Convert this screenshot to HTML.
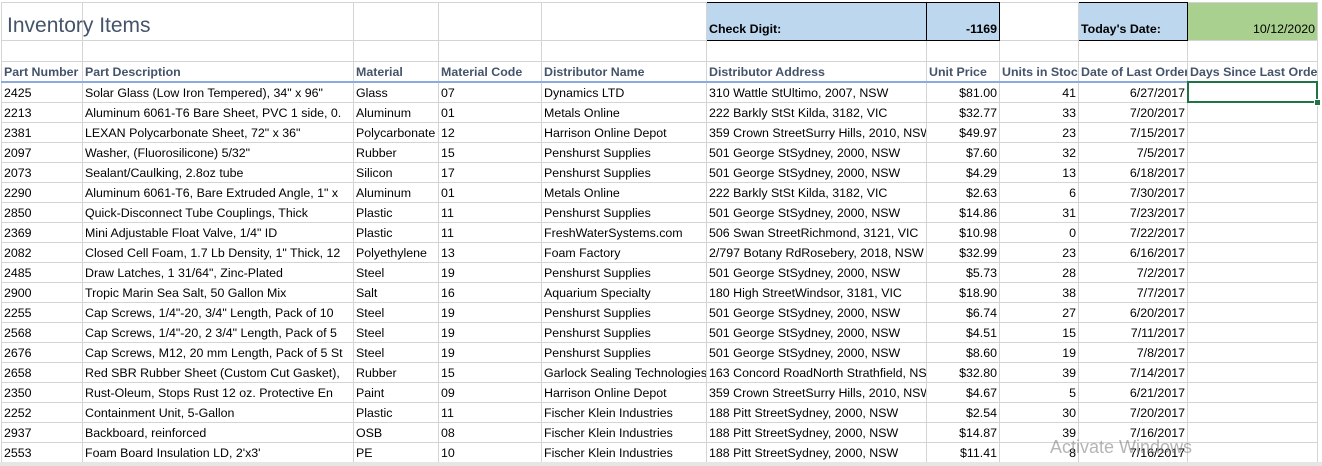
<!DOCTYPE html>
<html><head><meta charset="utf-8"><style>
html,body{margin:0;padding:0;background:#fff;width:1322px;height:466px;overflow:hidden;font-family:"Liberation Sans",sans-serif;}
table{position:absolute;left:1px;top:2px;width:1316px;border-collapse:collapse;table-layout:fixed;font-size:12.4px;color:#000;}
td{border:1px solid #d4d4d4;padding:0 2px;height:19px;white-space:nowrap;overflow:hidden;line-height:18px;vertical-align:bottom;}
td.r{text-align:right;}
tr.h td{color:#44546a;font-weight:bold;font-size:12.4px;}
tr.h{border-bottom:2px solid #8ea9db;}
.title{position:absolute;left:7px;top:14px;font-size:21px;color:#44546a;}
.blue{background:#bdd7ee;font-weight:bold;border:1px solid #000 !important;}
.green{background:#a9d08e;}
tr.t td{padding-bottom:2px;}
.sel{position:absolute;left:1187px;top:81px;width:127px;height:18px;border:2px solid #217346;}
.sel:after{content:"";position:absolute;right:-5px;bottom:-5px;width:5px;height:5px;background:#217346;border:1px solid #fff;}
.wm{position:absolute;left:1050px;top:437px;font-size:18px;color:rgba(120,120,120,.55);}
.bot{position:absolute;left:0;top:462px;width:1322px;height:4px;background:#e6e6e6;}
</style></head><body>
<table>
<colgroup><col style="width:81px"><col style="width:271px"><col style="width:85px"><col style="width:103px"><col style="width:165px"><col style="width:220px"><col style="width:73px"><col style="width:79px"><col style="width:109px"><col style="width:130px"></colgroup>
<tr class="t" style="height:38px"><td style="height:35px"></td><td></td><td></td><td></td><td></td><td class="blue">Check Digit:</td><td class="blue r">-1169</td><td></td><td class="blue">Today's Date:</td><td class="green r">10/12/2020</td></tr>
<tr style="height:21px"><td style="height:20px"></td><td></td><td></td><td></td><td></td><td></td><td></td><td></td><td></td><td></td></tr>
<tr class="h"><td>Part Number</td><td>Part Description</td><td>Material</td><td>Material Code</td><td>Distributor Name</td><td>Distributor Address</td><td>Unit Price</td><td>Units in Stock</td><td>Date of Last Order</td><td>Days Since Last Order</td></tr>
<tr><td>2425</td><td>Solar Glass (Low Iron Tempered), 34" x 96"</td><td>Glass</td><td>07</td><td>Dynamics LTD</td><td>310 Wattle StUltimo, 2007, NSW</td><td class="r">$81.00</td><td class="r">41</td><td class="r">6/27/2017</td><td></td></tr>
<tr><td>2213</td><td>Aluminum 6061-T6 Bare Sheet, PVC 1 side, 0.</td><td>Aluminum</td><td>01</td><td>Metals Online</td><td>222 Barkly StSt Kilda, 3182, VIC</td><td class="r">$32.77</td><td class="r">33</td><td class="r">7/20/2017</td><td></td></tr>
<tr><td>2381</td><td>LEXAN Polycarbonate Sheet, 72" x 36"</td><td>Polycarbonate</td><td>12</td><td>Harrison Online Depot</td><td>359 Crown StreetSurry Hills, 2010, NSW</td><td class="r">$49.97</td><td class="r">23</td><td class="r">7/15/2017</td><td></td></tr>
<tr><td>2097</td><td>Washer, (Fluorosilicone) 5/32"</td><td>Rubber</td><td>15</td><td>Penshurst Supplies</td><td>501 George StSydney, 2000, NSW</td><td class="r">$7.60</td><td class="r">32</td><td class="r">7/5/2017</td><td></td></tr>
<tr><td>2073</td><td>Sealant/Caulking, 2.8oz tube</td><td>Silicon</td><td>17</td><td>Penshurst Supplies</td><td>501 George StSydney, 2000, NSW</td><td class="r">$4.29</td><td class="r">13</td><td class="r">6/18/2017</td><td></td></tr>
<tr><td>2290</td><td>Aluminum 6061-T6, Bare Extruded Angle, 1" x</td><td>Aluminum</td><td>01</td><td>Metals Online</td><td>222 Barkly StSt Kilda, 3182, VIC</td><td class="r">$2.63</td><td class="r">6</td><td class="r">7/30/2017</td><td></td></tr>
<tr><td>2850</td><td>Quick-Disconnect Tube Couplings, Thick</td><td>Plastic</td><td>11</td><td>Penshurst Supplies</td><td>501 George StSydney, 2000, NSW</td><td class="r">$14.86</td><td class="r">31</td><td class="r">7/23/2017</td><td></td></tr>
<tr><td>2369</td><td>Mini Adjustable Float Valve, 1/4" ID</td><td>Plastic</td><td>11</td><td>FreshWaterSystems.com</td><td>506 Swan StreetRichmond, 3121, VIC</td><td class="r">$10.98</td><td class="r">0</td><td class="r">7/22/2017</td><td></td></tr>
<tr><td>2082</td><td>Closed Cell Foam, 1.7 Lb Density, 1" Thick, 12</td><td>Polyethylene</td><td>13</td><td>Foam Factory</td><td>2/797 Botany RdRosebery, 2018, NSW</td><td class="r">$32.99</td><td class="r">23</td><td class="r">6/16/2017</td><td></td></tr>
<tr><td>2485</td><td>Draw Latches, 1 31/64", Zinc-Plated</td><td>Steel</td><td>19</td><td>Penshurst Supplies</td><td>501 George StSydney, 2000, NSW</td><td class="r">$5.73</td><td class="r">28</td><td class="r">7/2/2017</td><td></td></tr>
<tr><td>2900</td><td>Tropic Marin Sea Salt, 50 Gallon Mix</td><td>Salt</td><td>16</td><td>Aquarium Specialty</td><td>180 High StreetWindsor, 3181, VIC</td><td class="r">$18.90</td><td class="r">38</td><td class="r">7/7/2017</td><td></td></tr>
<tr><td>2255</td><td>Cap Screws, 1/4"-20, 3/4" Length, Pack of 10</td><td>Steel</td><td>19</td><td>Penshurst Supplies</td><td>501 George StSydney, 2000, NSW</td><td class="r">$6.74</td><td class="r">27</td><td class="r">6/20/2017</td><td></td></tr>
<tr><td>2568</td><td>Cap Screws, 1/4"-20, 2 3/4" Length, Pack of 5</td><td>Steel</td><td>19</td><td>Penshurst Supplies</td><td>501 George StSydney, 2000, NSW</td><td class="r">$4.51</td><td class="r">15</td><td class="r">7/11/2017</td><td></td></tr>
<tr><td>2676</td><td>Cap Screws, M12, 20 mm Length, Pack of 5 St</td><td>Steel</td><td>19</td><td>Penshurst Supplies</td><td>501 George StSydney, 2000, NSW</td><td class="r">$8.60</td><td class="r">19</td><td class="r">7/8/2017</td><td></td></tr>
<tr><td>2658</td><td>Red SBR Rubber Sheet (Custom Cut Gasket),</td><td>Rubber</td><td>15</td><td>Garlock Sealing Technologies</td><td>163 Concord RoadNorth Strathfield, NSW</td><td class="r">$32.80</td><td class="r">39</td><td class="r">7/14/2017</td><td></td></tr>
<tr><td>2350</td><td>Rust-Oleum, Stops Rust 12 oz. Protective En</td><td>Paint</td><td>09</td><td>Harrison Online Depot</td><td>359 Crown StreetSurry Hills, 2010, NSW</td><td class="r">$4.67</td><td class="r">5</td><td class="r">6/21/2017</td><td></td></tr>
<tr><td>2252</td><td>Containment Unit, 5-Gallon</td><td>Plastic</td><td>11</td><td>Fischer Klein Industries</td><td>188 Pitt StreetSydney, 2000, NSW</td><td class="r">$2.54</td><td class="r">30</td><td class="r">7/20/2017</td><td></td></tr>
<tr><td>2937</td><td>Backboard, reinforced</td><td>OSB</td><td>08</td><td>Fischer Klein Industries</td><td>188 Pitt StreetSydney, 2000, NSW</td><td class="r">$14.87</td><td class="r">39</td><td class="r">7/16/2017</td><td></td></tr>
<tr><td>2553</td><td>Foam Board Insulation LD, 2'x3'</td><td>PE</td><td>10</td><td>Fischer Klein Industries</td><td>188 Pitt StreetSydney, 2000, NSW</td><td class="r">$11.41</td><td class="r">8</td><td class="r">7/16/2017</td><td></td></tr>
</table>
<div class="title">Inventory Items</div>
<div class="sel"></div>
<div class="wm">Activate Windows</div>
<div class="bot"></div>
</body></html>
